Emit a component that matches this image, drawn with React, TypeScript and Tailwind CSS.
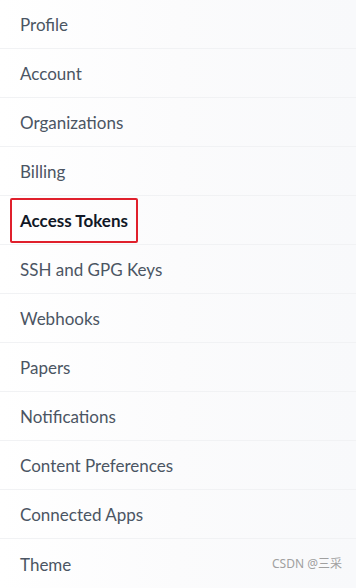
const items = [
  'Profile',
  'Account',
  'Organizations',
  'Billing',
  'Access Tokens',
  'SSH and GPG Keys',
  'Webhooks',
  'Papers',
  'Notifications',
  'Content Preferences',
  'Connected Apps',
  'Theme',
]

export default function App() {
  return (
    <div
      className="relative w-[356px] h-[588px] overflow-hidden bg-gradient-to-r from-white via-[#fbfbfc] to-[#f8f9fb]"
      style={{ fontFamily: 'Lato, "Noto Sans", sans-serif' }}
    >
      <ul className="flex flex-col">
        {items.map((label, i) => {
          const active = label === 'Access Tokens'
          return (
            <li
              key={label}
              className={`h-[49px] flex items-center px-5 pt-[2px] ${i < items.length - 1 ? 'border-b border-[#f1f2f4]' : ''}`}
            >
              {active ? (
                <span className="-mx-[10px] -mt-[2px] px-[8px] h-[45px] flex items-center pt-[2px] border-[2.5px] border-[#e0202c] rounded-[2px] text-[17px] font-bold text-[#111827]">
                  {label}
                </span>
              ) : (
                <span className="text-[17px] text-[#4b5563]">{label}</span>
              )}
            </li>
          )
        })}
      </ul>
      <div
        className="absolute right-[14px] bottom-[15px] text-[12px] text-[#a0a0a0]"
        style={{ fontFamily: '"Noto Sans", "Noto Sans CJK SC", sans-serif' }}
      >
        CSDN @三采
      </div>
    </div>
  )
}
